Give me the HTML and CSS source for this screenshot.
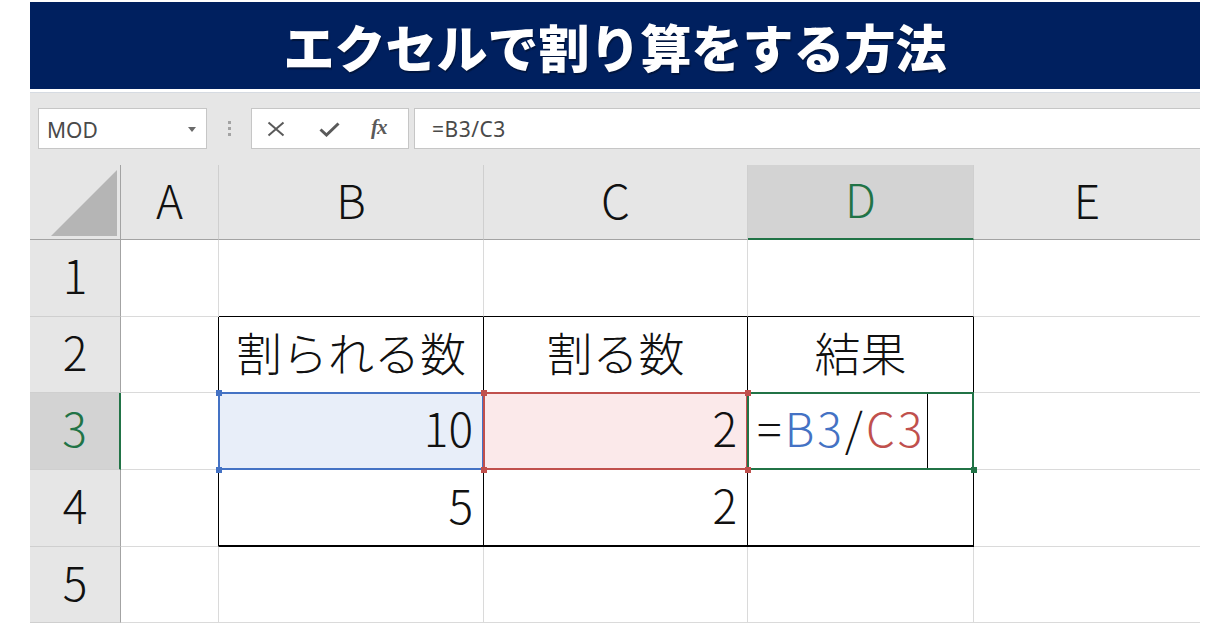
FILE: index.html
```html
<!DOCTYPE html>
<html lang="ja">
<head>
<meta charset="utf-8">
<title>エクセルで割り算をする方法</title>
<link rel="stylesheet" href="styles.css">
</head>
<body>
<div class="page">
  <header class="title">エクセルで割り算をする方法</header>
  <div class="excel">
    <div class="toolbar">
      <div class="namebox">
        <span class="nb-text">MOD</span>
        <svg class="nb-arrow" width="8" height="5" viewBox="0 0 8 5"><path d="M0 0 H8 L4 5 Z" fill="#6a6a6a"/></svg>
      </div>
      <div class="grip"><i></i><i></i><i></i></div>
      <div class="fbtns">
        <svg class="ico-x" width="18" height="16" viewBox="0 0 18 16"><path d="M1.5 1.5 L16.5 14.5 M16.5 1.5 L1.5 14.5" stroke="#5a5a5a" stroke-width="2" fill="none"/></svg>
        <svg class="ico-ok" width="21" height="15" viewBox="0 0 21 15"><path d="M1.5 7.5 L7.5 13 L19.5 1.5" stroke="#5a5a5a" stroke-width="3" fill="none" stroke-linejoin="miter"/></svg>
        <span class="fx">fx</span>
      </div>
      <div class="finput">=B3/C3</div>
    </div>
    <div class="sheet">
      <div class="corner"><svg width="66" height="66" viewBox="0 0 66 66"><path d="M66 0 V66 H0 Z" fill="#b5b5b5"/></svg></div>
      <div class="ch">A</div>
      <div class="ch">B</div>
      <div class="ch">C</div>
      <div class="ch ch-sel">D</div>
      <div class="ch ch-last">E</div>

      <div class="rh">1</div>
      <div class="c"></div>
      <div class="c tb-top"></div>
      <div class="c tb-top"></div>
      <div class="c tb-top"></div>
      <div class="c last"></div>

      <div class="rh">2</div>
      <div class="c tb-left"></div>
      <div class="c t center">割られる数</div>
      <div class="c t center">割る数</div>
      <div class="c t center">結果</div>
      <div class="c last"></div>

      <div class="rh rh-sel">3</div>
      <div class="c tb-left"></div>
      <div class="c t num ref-blue">10<b class="sq tl"></b><b class="sq tr"></b><b class="sq bl"></b><b class="sq br"></b></div>
      <div class="c t num ref-red">2<b class="sq tl"></b><b class="sq tr"></b><b class="sq bl"></b><b class="sq br"></b></div>
      <div class="c t edit"><span class="ftext">=<span class="blue">B3</span>/<span class="red">C3</span></span><span class="caret"></span><b class="handle"></b></div>
      <div class="c last"></div>

      <div class="rh">4</div>
      <div class="c tb-left"></div>
      <div class="c t tb-bot num">5</div>
      <div class="c t tb-bot num">2</div>
      <div class="c t tb-bot"></div>
      <div class="c last"></div>

      <div class="rh">5</div>
      <div class="c"></div>
      <div class="c"></div>
      <div class="c"></div>
      <div class="c"></div>
      <div class="c last"></div>
    </div>
  </div>
</div>
</body>
</html>
```

FILE: styles.css
```css
* { box-sizing: border-box; }
html, body { margin: 0; padding: 0; background: #fff; }
.page {
  width: 1230px;
  height: 631px;
  padding: 2px 30px 0 30px;
  display: flex;
  flex-direction: column;
  overflow: hidden;
}
.title {
  height: 87px;
  background: #00205f;
  color: #fff;
  font-family: "Noto Sans CJK JP", sans-serif;
  font-weight: 900;
  font-size: 51px;
  letter-spacing: 0;
  display: flex;
  align-items: center;
  justify-content: center;
  text-shadow: 1px 2px 1px rgba(0, 0, 0, 0.35);
}
.excel {
  margin-top: 3px;
  display: flex;
  flex-direction: column;
}
.toolbar {
  height: 73px;
  background: #e6e6e6;
  border-top: 1px solid #d6dbe2;
  display: flex;
  align-items: flex-start;
  padding: 15px 0 0 8px;
}
.namebox {
  width: 169px;
  height: 41px;
  background: #fff;
  border: 1px solid #c6c6c6;
  display: flex;
  align-items: center;
  justify-content: space-between;
  padding: 0 10px 0 8px;
}
.nb-text {
  font-family: "Noto Sans", sans-serif;
  font-size: 21px;
  color: #4a4a4a;
  padding-top: 2px;
}
.nb-arrow { margin-top: 2px; }
.grip {
  width: 44px;
  height: 41px;
  display: flex;
  flex-direction: column;
  align-items: center;
  justify-content: center;
  gap: 3px;
}
.grip i {
  display: block;
  width: 3px;
  height: 3px;
  background: #a3a3a3;
}
.fbtns {
  width: 158px;
  height: 41px;
  background: #fff;
  border: 1px solid #c6c6c6;
  display: flex;
  align-items: center;
  padding-left: 15px;
}
.ico-x { margin-right: 34px; }
.ico-ok { margin-right: 31px; margin-top: 2px; }
.fx {
  font-family: "Liberation Serif", serif;
  font-style: italic;
  font-weight: bold;
  font-size: 21px;
  color: #5a5a5a;
  margin-top: -2px;
  letter-spacing: -1px;
}
.finput {
  flex: 1;
  height: 41px;
  margin-left: 5px;
  background: #fff;
  border-top: 1px solid #c6c6c6;
  border-bottom: 1px solid #c6c6c6;
  border-left: 1px solid #c6c6c6;
  display: flex;
  align-items: center;
  padding-left: 17px;
  font-family: "Noto Sans", sans-serif;
  font-size: 21px;
  color: #4a4a4a;
  letter-spacing: 0.5px;
}
.sheet {
  display: grid;
  grid-template-columns: 91px 98px 265px 264px 226px 226px;
  grid-template-rows: 75px 77px 76px 77px 77px 76px;
  font-family: "Noto Sans CJK JP", sans-serif;
  font-weight: 300;
  font-size: 46px;
  line-height: 1;
  color: #111;
}
.corner {
  background: #e6e6e6;
  border-right: 1px solid #a3a3a3;
  border-bottom: 1px solid #a3a3a3;
  display: flex;
  align-items: flex-start;
  justify-content: flex-end;
  padding: 5px 3px 0 0;
}
.ch {
  background: #e6e6e6;
  border-right: 1px solid #cfcfcf;
  border-bottom: 1px solid #a3a3a3;
  display: flex;
  align-items: center;
  justify-content: center;
  padding-bottom: 7px;
}
.ch-last { border-right: 0; }
.ch-sel {
  background: #d3d3d3;
  color: #217346;
  border-bottom: 2px solid #217346;
}
.rh {
  background: #e6e6e6;
  border-right: 1px solid #a3a3a3;
  border-bottom: 1px solid #cfcfcf;
  display: flex;
  align-items: center;
  justify-content: center;
  padding-bottom: 8px;
}
.rh-sel {
  background: #d3d3d3;
  color: #217346;
  border-right: 2px solid #217346;
}
.c {
  background: #fff;
  border-right: 1px solid #dadada;
  border-bottom: 1px solid #dadada;
  display: flex;
  align-items: center;
  position: relative;
  padding-bottom: 8px;
}
.c.last { border-right: 0; }
.tb-top { border-bottom-color: #000; }
.tb-left { border-right-color: #000; }
.t { border-right-color: #000; border-bottom-color: #000; }
.tb-bot { border-bottom: 2px solid #000; }
.center { justify-content: center; }
.num { justify-content: flex-end; padding-right: 10px; }

.ref-blue { background: #e8eef9; }
.ref-red { background: #fbe9ea; }
.ref-blue::after, .ref-red::after, .edit::after {
  content: "";
  position: absolute;
  left: -1px;
  top: -1px;
  right: -1px;
  bottom: -1px;
  border: 2px solid #4472c4;
  pointer-events: none;
}
.ref-red::after { border-color: #c0504d; }
.edit::after { border-color: #217346; }
.sq {
  position: absolute;
  width: 6px;
  height: 6px;
  background: #4472c4;
  z-index: 2;
}
.ref-red .sq { background: #c0504d; }
.sq.tl { left: -3px; top: -3px; }
.sq.tr { right: -4px; top: -3px; }
.sq.bl { left: -3px; bottom: -4px; }
.sq.br { right: -4px; bottom: -4px; }
.edit {
  padding-left: 9px;
  padding-bottom: 0;
  align-items: stretch;
}
.ftext {
  display: flex;
  align-items: center;
  letter-spacing: 3px;
  padding-bottom: 8px;
}
.blue { color: #4472c4; }
.red { color: #c0504d; }
.caret {
  width: 1px;
  background: #000;
  margin-left: 2px;
}
.handle {
  position: absolute;
  right: -4px;
  bottom: -4px;
  width: 6px;
  height: 6px;
  background: #217346;
  z-index: 2;
}
```
